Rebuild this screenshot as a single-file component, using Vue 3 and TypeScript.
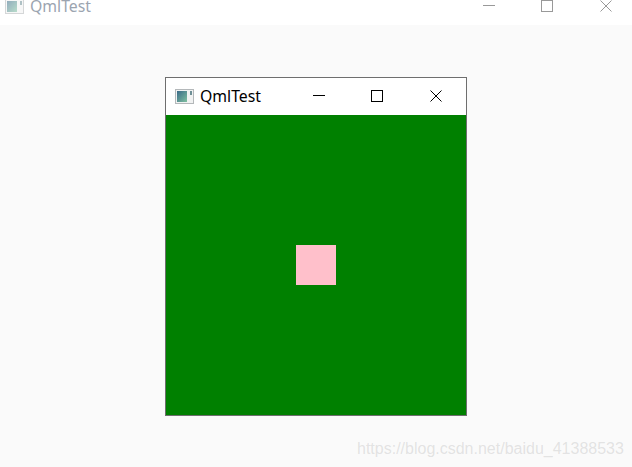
<script setup lang="ts">
const title = 'QmlTest'
</script>

<template>
  <div class="page">
    <header class="titlebar outer">
      <svg class="app-icon" viewBox="0 0 19 15" width="19" height="15">
        <defs>
          <linearGradient id="g1" x1="0" y1="0" x2="1" y2="1">
            <stop offset="0" stop-color="#3a6a88" />
            <stop offset="1" stop-color="#7fc0a0" />
          </linearGradient>
        </defs>
        <rect x="0.5" y="0.5" width="18" height="14" fill="#f1f2f2" stroke="#b4b8ba" />
        <rect x="2" y="2" width="10" height="11" fill="url(#g1)" />
        <rect x="15" y="2" width="2" height="4" fill="#6f8f96" />
      </svg>
      <span class="name">{{ title }}</span>
      <div class="controls">
        <svg viewBox="0 0 12 12" width="12" height="12"><path d="M0 5.5H12" stroke="currentColor" fill="none" /></svg>
        <svg viewBox="0 0 12 12" width="12" height="12"><rect x="0.5" y="0.5" width="11" height="11" stroke="currentColor" fill="none" /></svg>
        <svg class="close" viewBox="0 0 12 12" width="12" height="12"><path d="M0.5 0.5L11.5 11.5M11.5 0.5L0.5 11.5" stroke="currentColor" fill="none" /></svg>
      </div>
    </header>

    <main class="desktop">
      <section class="window">
        <header class="titlebar">
          <svg class="app-icon" viewBox="0 0 19 15" width="19" height="15">
            <rect x="0.5" y="0.5" width="18" height="14" fill="#f1f2f2" stroke="#b4b8ba" />
            <rect x="2" y="2" width="10" height="11" fill="url(#g1)" />
            <rect x="15" y="2" width="2" height="4" fill="#6f8f96" />
          </svg>
          <span class="name">{{ title }}</span>
          <div class="controls">
            <svg viewBox="0 0 12 12" width="12" height="12"><path d="M0 5.5H12" stroke="currentColor" fill="none" /></svg>
            <svg viewBox="0 0 12 12" width="12" height="12"><rect x="0.5" y="0.5" width="11" height="11" stroke="currentColor" fill="none" /></svg>
            <svg class="close" viewBox="0 0 12 12" width="12" height="12"><path d="M0.5 0.5L11.5 11.5M11.5 0.5L0.5 11.5" stroke="currentColor" fill="none" /></svg>
          </div>
        </header>
        <div class="content">
          <div class="square"></div>
        </div>
      </section>
    </main>

    <div class="watermark">https://blog.csdn.net/baidu_41388533</div>
  </div>
</template>

<style>
html, body { margin: 0; overflow: hidden; }
</style>

<style scoped>
.page {
  position: relative;
  width: 632px;
  height: 467px;
  overflow: hidden;
  background: #fafafa;
  font-family: "Noto Sans", "Open Sans", sans-serif;
}
.titlebar {
  display: flex;
  align-items: center;
  box-sizing: border-box;
  height: 37px;
  padding: 0 24px 0 9px;
  background: #fff;
  color: #000;
}
.titlebar.outer {
  margin-top: -12px;
  padding: 0 20px 0 5px;
}
.outer .app-icon, .outer .name { opacity: 0.55; }
.outer .controls { color: #999; }
.outer .name { color: #4a5a70; }
.app-icon { flex: none; }
.name {
  margin: -2px 0 0 6px;
  font-size: 15.8px;
  line-height: 20px;
}
.controls {
  margin: -1px 0 0 auto;
  display: flex;
  gap: 46px;
}
.controls svg { display: block; }
.controls .close { margin-left: 1px; }
.desktop {
  display: flex;
  justify-content: flex-start;
  padding: 52px 0 0 165px;
}
.window {
  width: 302px;
  box-sizing: border-box;
  border: 1px solid #6e6e6e;
  background: #fff;
}
.content {
  height: 300px;
  background: #008000;
  display: flex;
  align-items: center;
  justify-content: center;
}
.square {
  width: 40px;
  height: 40px;
  background: #ffc0cb;
}
.watermark {
  position: absolute;
  left: 357px;
  top: 439px;
  font-family: "Liberation Sans", sans-serif;
  font-size: 16px;
  line-height: 20px;
  color: rgba(160, 160, 160, 0.27);
  white-space: nowrap;
}
</style>
